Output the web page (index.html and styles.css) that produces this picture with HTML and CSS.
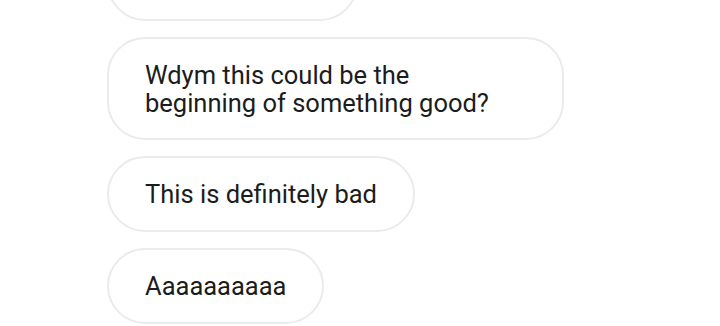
FILE: index.html
```html
<!DOCTYPE html>
<html lang="en">
<head>
    <meta charset="UTF-8">
    <title>Messages</title>
    <link rel="stylesheet" href="styles.css">
</head>
<body>
    <div class="thread">
        <div class="bubble">Okay okay okay</div>
        <div class="bubble bubble-wide">Wdym this could be the<br>beginning of something good?</div>
        <div class="bubble">This is definitely bad</div>
        <div class="bubble">Aaaaaaaaaa</div>
    </div>
</body>
</html>
```

FILE: styles.css
```css
* {
    margin: 0;
    padding: 0;
    box-sizing: border-box;
}

body {
    font-family: Roboto, 'Noto Sans', sans-serif;
    background: #fff;
    color: #1c1c1c;
    overflow: hidden;
}

.thread {
    display: flex;
    flex-direction: column;
    align-items: flex-start;
    gap: 16px;
    margin-top: -55px;
    padding-left: 107px;
}

.bubble {
    border: 2px solid #ebebeb;
    border-radius: 38px;
    padding: 22px 36px;
    font-size: 25.5px;
    line-height: 28px;
    background: #fff;
}

.bubble-wide {
    width: 457px;
    padding-bottom: 21px;
}
```
